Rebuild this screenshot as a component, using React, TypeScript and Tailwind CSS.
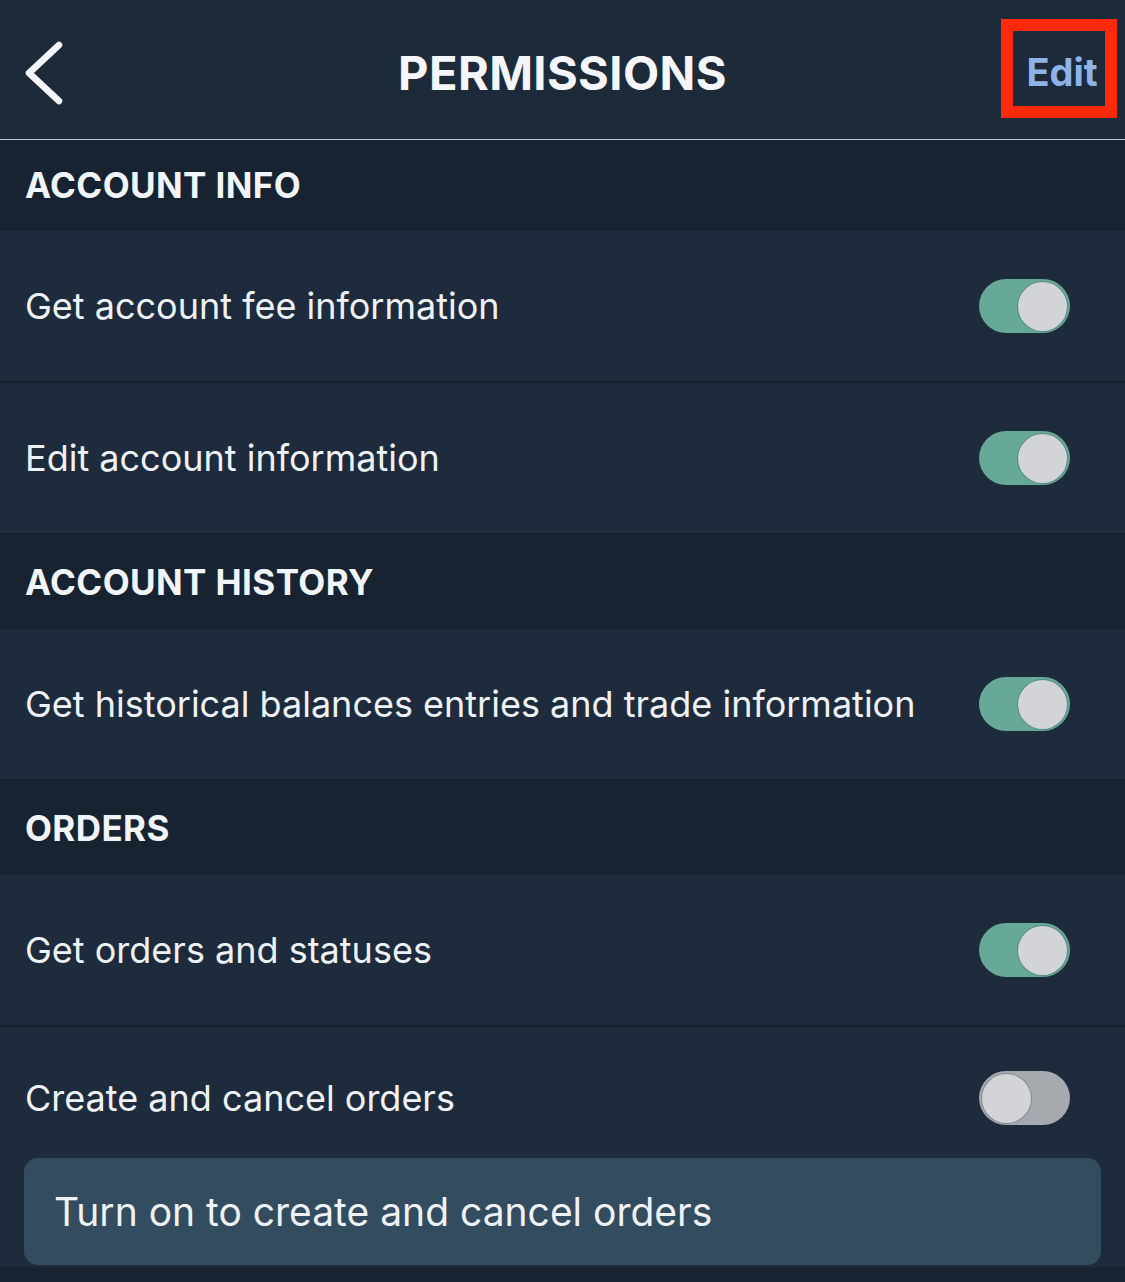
import React from "react";

const font = { fontFamily: "Inter, 'Noto Sans', sans-serif" };

function Toggle({ on }: { on: boolean }) {
  return (
    <div
      className={`relative h-[54px] w-[91px] shrink-0 rounded-full ${
        on ? "bg-[#66a996]" : "bg-[#a6aaaf]"
      }`}
    >
      <div
        className={`absolute top-[3px] h-[49px] w-[49px] rounded-full bg-[#d2d4d7] shadow-[0_0_0_1px_rgba(60,80,90,0.35)] ${
          on ? "right-[3px]" : "left-[3px]"
        }`}
      />
    </div>
  );
}

function Section({ title, h }: { title: string; h: string }) {
  return (
    <div className={`flex items-center bg-[#172331] pl-[25px] ${h}`}>
      <span className="text-[35px] font-bold leading-none tracking-[0.4px] text-[#f1f4f8]">
        {title}
      </span>
    </div>
  );
}

function Row({ label, on }: { label: string; on: boolean }) {
  return (
    <div className="flex h-[152px] items-center justify-between border-b-2 border-[#151f2b] bg-[#1e2b3c] pl-[25px] pr-[55px]">
      <span className="text-[36px] leading-none text-[#eef2f7]">{label}</span>
      <Toggle on={on} />
    </div>
  );
}

export default function App() {
  return (
    <div style={font} className="h-[1282px] w-[1125px] overflow-hidden bg-[#1e2b3c]">
      <div className="relative flex h-[140px] items-center justify-center border-b-[1.5px] border-[#b4c6d4] bg-[#1d2a3a] pt-[6px]">
        <svg
          className="absolute left-[22px] top-[40px]"
          width="44"
          height="66"
          viewBox="0 0 44 66"
        >
          <path
            d="M37 5 L7 33 L37 61"
            fill="none"
            stroke="#f4f6f9"
            strokeWidth="6.5"
            strokeLinecap="round"
            strokeLinejoin="round"
          />
        </svg>
        <span className="text-[47px] font-bold leading-none tracking-[0.4px] text-[#f4f6f9]">
          PERMISSIONS
        </span>
        <div className="absolute left-[1001px] top-[19px] flex h-[99px] w-[116px] items-center justify-center border-[12px] border-[#ff2a0a] pt-[6px]">
          <span className="ml-[6px] text-[38px] font-bold leading-none text-[#8fb3e6]">
            Edit
          </span>
        </div>
      </div>
      <Section title="ACCOUNT INFO" h="h-[91px]" />
      <Row label="Get account fee information" on />
      <Row label="Edit account information" on />
      <Section title="ACCOUNT HISTORY" h="h-[94px]" />
      <Row label="Get historical balances entries and trade information" on />
      <Section title="ORDERS" h="h-[94px]" />
      <Row label="Get orders and statuses" on />
      <div className="bg-[#1e2b3c] pb-[2px]">
        <div className="flex items-center justify-between pl-[25px] pr-[55px] pt-[44px]">
          <span className="text-[36px] leading-none text-[#eef2f7]">
            Create and cancel orders
          </span>
          <Toggle on={false} />
        </div>
        <div className="mx-[24px] mt-[33px] flex h-[107px] items-center rounded-[14px] bg-[#344c5f] pl-[30px]">
          <span className="text-[39px] leading-none text-[#eef2f7]">
            Turn on to create and cancel orders
          </span>
        </div>
      </div>
      <div className="h-[20px] bg-[#182432]" />
    </div>
  );
}
